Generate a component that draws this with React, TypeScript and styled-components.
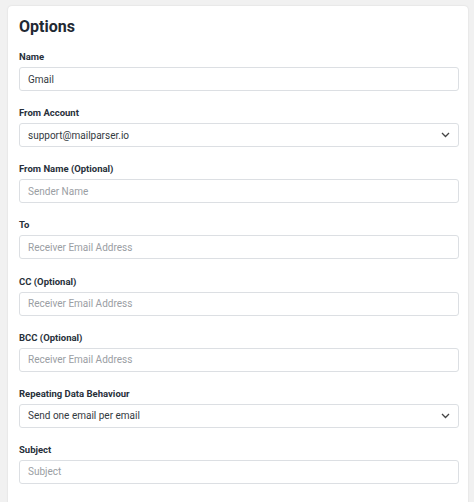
import React from "react";
import styled, { createGlobalStyle } from "styled-components";

const GlobalStyle = createGlobalStyle`
  html, body {
    margin: 0;
    padding: 0;
    background: #f1f1f1;
    font-family: Roboto, "Liberation Sans", Arial, sans-serif;
  }
`;

const Page = styled.div`
  padding: 6px 6px 0 8px;
  height: 502px;
  box-sizing: border-box;
  overflow: hidden;
`;

const Card = styled.div`
  background: #fff;
  border-radius: 4px;
  box-shadow: 0 0 2px rgba(0, 0, 0, 0.12);
  padding: 10px 9px 20px 11px;
  display: flex;
  flex-direction: column;
`;

const Title = styled.h2`
  margin: 0 0 12px;
  font-size: 16px;
  line-height: 22px;
  font-weight: 700;
  color: #1f2933;
`;

const Field = styled.div`
  display: flex;
  flex-direction: column;
  margin-bottom: 15.15px;
`;

const Label = styled.label`
  font-size: 9.5px;
  line-height: 14px;
  font-weight: 700;
  color: #27303a;
  margin-bottom: 3px;
`;

const Box = styled.div<{ $muted?: boolean }>`
  height: 24px;
  box-sizing: border-box;
  border: 1px solid #dcdfe3;
  border-radius: 3px;
  padding: 0 8px;
  display: flex;
  align-items: center;
  justify-content: space-between;
  font-size: 10px;
  color: ${(p) => (p.$muted ? "#9a9ea3" : "#333a41")};
`;

const Chevron = () => (
  <svg width="9" height="6" viewBox="0 0 9 6" fill="none">
    <path d="M1 1l3.5 3.5L8 1" stroke="#444" strokeWidth="1.3" />
  </svg>
);

type FieldDef = { label: string; value: string; muted?: boolean; select?: boolean };

const fields: FieldDef[] = [
  { label: "Name", value: "Gmail" },
  { label: "From Account", value: "support@mailparser.io", select: true },
  { label: "From Name (Optional)", value: "Sender Name", muted: true },
  { label: "To", value: "Receiver Email Address", muted: true },
  { label: "CC (Optional)", value: "Receiver Email Address", muted: true },
  { label: "BCC (Optional)", value: "Receiver Email Address", muted: true },
  { label: "Repeating Data Behaviour", value: "Send one email per email", select: true },
  { label: "Subject", value: "Subject", muted: true },
];

export default function App() {
  return (
    <>
      <GlobalStyle />
      <Page>
        <Card>
          <Title>Options</Title>
          {fields.map((f) => (
            <Field key={f.label}>
              <Label>{f.label}</Label>
              <Box $muted={f.muted}>
                <span>{f.value}</span>
                {f.select && <Chevron />}
              </Box>
            </Field>
          ))}
        </Card>
      </Page>
    </>
  );
}
